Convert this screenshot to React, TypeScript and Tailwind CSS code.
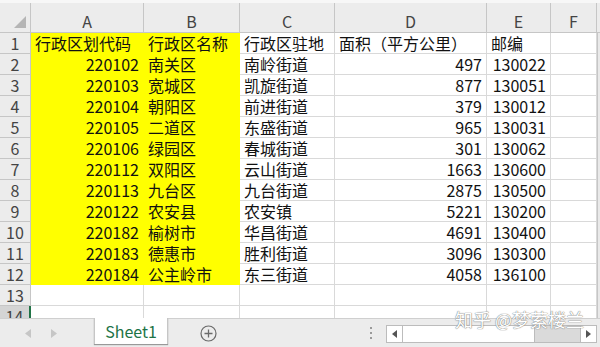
import React from "react"

const font = { fontFamily: "'Noto Sans CJK SC', 'Noto Sans', sans-serif" }

const cols = ["A", "B", "C", "D", "E", "F"]
const widths = ["w-[113px]", "w-[96px]", "w-[95px]", "w-[152px]", "w-[64px]", "w-[46px]"]

const data: string[][] = [
  ["行政区划代码", "行政区名称", "行政区驻地", "面积（平方公里）", "邮编"],
  ["220102", "南关区", "南岭街道", "497", "130022"],
  ["220103", "宽城区", "凯旋街道", "877", "130051"],
  ["220104", "朝阳区", "前进街道", "379", "130012"],
  ["220105", "二道区", "东盛街道", "965", "130031"],
  ["220106", "绿园区", "春城街道", "301", "130062"],
  ["220112", "双阳区", "云山街道", "1663", "130600"],
  ["220113", "九台区", "九台街道", "2875", "130500"],
  ["220122", "农安县", "农安镇", "5221", "130200"],
  ["220182", "榆树市", "华昌街道", "4691", "130400"],
  ["220183", "德惠市", "胜利街道", "3096", "130300"],
  ["220184", "公主岭市", "东三街道", "4058", "136100"],
  [],
  [],
]

function Cell({ text, col, row }: { text?: string; col: number; row: number }) {
  const yellow = row > 0 && row <= 12 && col < 2
  const numeric = text !== undefined && /^\d+$/.test(text)
  return (
    <div
      className={`${widths[col]} h-full shrink-0 flex items-center border-r border-b px-[4px] leading-[20px] whitespace-nowrap ${
        yellow ? "bg-[#ffff00] border-[#ffff00]" : "bg-white border-[#d9d9d9]"
      } ${numeric ? "justify-end" : "justify-start"}`}
    >
      {text}
    </div>
  )
}

export default function App() {
  return (
    <div className="relative w-[600px] h-[347px] overflow-hidden bg-[#e9e9e9] text-[16px] text-[#111]" style={font}>
      <div className="h-[3px] bg-[#f7f7f7]" />

      {/* column headers */}
      <div className="flex h-[30px] bg-[#ececec] border-b border-[#c6c6c6]">
        <div className="w-[31px] shrink-0 relative border-r border-[#c6c6c6]">
          <svg className="absolute right-[4px] bottom-[4px]" width="12" height="12" viewBox="0 0 12 12">
            <polygon points="12,0 12,12 0,12" fill="#b5b5b5" />
          </svg>
        </div>
        {cols.map((c, i) => (
          <div
            key={c}
            className={`${widths[i]} shrink-0 flex items-end justify-center pb-[1px] leading-[20px] text-[#444] border-r border-[#c6c6c6]`}
          >
            {c}
          </div>
        ))}
        <div className="flex-1" />
      </div>

      {/* rows */}
      {data.map((r, ri) => {
        const row = ri + 1
        return (
          <div key={row} className="flex h-[21px]">
            <div
              className={`w-[31px] shrink-0 flex items-center justify-center leading-[20px] text-[#444] border-b border-[#c6c6c6] ${
                row === 14 ? "bg-[#d4d4d4] border-r-2 border-r-[#217346]" : "bg-[#ececec] border-r"
              }`}
            >
              {row}
            </div>
            {cols.map((_, ci) => (
              <Cell key={ci} text={r[ci]} col={ci} row={row} />
            ))}
            <div className="flex-1 border-l border-[#c6c6c6] bg-[#e9e9e9]" />
          </div>
        )
      })}

      {/* sheet tab bar */}
      <div className="absolute left-0 right-0 top-[318px] h-[29px] flex items-start bg-[#ececec] border-t border-[#cfcfcf]">
        <div className="w-[94px] shrink-0 h-full flex items-center pl-[25px] gap-[20px]">
          <svg width="6" height="9" viewBox="0 0 6 9">
            <polygon points="6,0 6,9 0,4.5" fill="#c6c6c6" />
          </svg>
          <svg width="6" height="9" viewBox="0 0 6 9">
            <polygon points="0,0 0,9 6,4.5" fill="#c6c6c6" />
          </svg>
        </div>
        <div className="w-[74px] h-[26px] -mt-px shrink-0 bg-white border-x border-[#c6c6c6] shadow-[0_1px_1px_rgba(0,0,0,0.35)] flex items-center justify-center text-[#217346] leading-[20px]">
          Sheet1
        </div>
        <div className="ml-[32px] h-full flex items-center">
          <svg width="17" height="17" viewBox="0 0 17 17">
            <circle cx="8.5" cy="8.5" r="7.5" fill="none" stroke="#6a6a6a" strokeWidth="1.2" />
            <path d="M8.5 4.5v8M4.5 8.5h8" stroke="#6a6a6a" strokeWidth="1.3" />
          </svg>
        </div>
        <div className="flex-1" />
        <div className="h-full flex flex-col items-center justify-center gap-[3px] mr-[14px]">
          <span className="w-[2px] h-[2px] bg-[#9a9a9a]" />
          <span className="w-[2px] h-[2px] bg-[#9a9a9a]" />
          <span className="w-[2px] h-[2px] bg-[#9a9a9a]" />
        </div>
        <div className="mt-[6px] mr-[3px] flex h-[18px]">
          <div className="w-[17px] bg-white border border-[#bcbcbc] flex items-center justify-center">
            <svg width="5" height="8" viewBox="0 0 5 8">
              <polygon points="5,0 5,8 0,4" fill="#555" />
            </svg>
          </div>
          <div className="w-[132px] bg-white border-y border-r border-[#bcbcbc]" />
          <div className="w-[45px] bg-[#dadada] border-y border-[#bcbcbc]" />
          <div className="w-[17px] bg-white border border-[#bcbcbc] flex items-center justify-center">
            <svg width="5" height="8" viewBox="0 0 5 8">
              <polygon points="0,0 0,8 5,4" fill="#555" />
            </svg>
          </div>
        </div>
      </div>

      {/* watermark */}
      <div className="absolute left-[455px] top-[307px] text-[18px] leading-[24px] text-white whitespace-nowrap [text-shadow:0_0_1px_#777,0_0_1px_#777]">
        知乎 @梦萦楼兰
      </div>
    </div>
  )
}
